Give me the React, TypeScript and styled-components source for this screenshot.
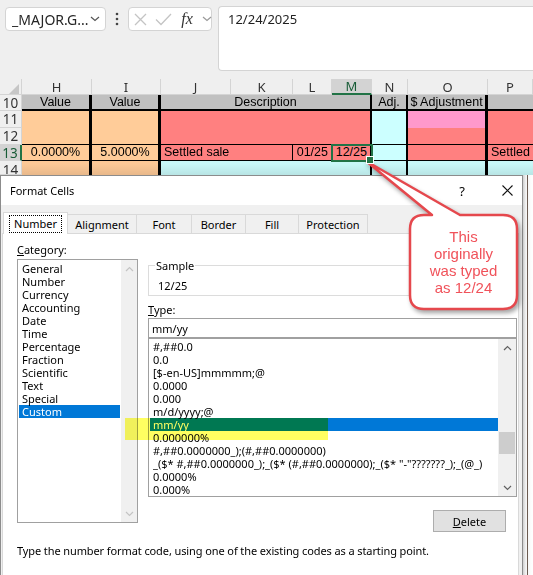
import React from "react";
import styled, { createGlobalStyle } from "styled-components";

const UI = `"Noto Sans", "DejaVu Sans", sans-serif`;
const CELL = `"Liberation Sans", Arial, sans-serif`;

const GlobalStyle = createGlobalStyle`
  * { box-sizing: border-box; }
  html, body { margin: 0; padding: 0; background: #efefef; }
  body { font-family: ${UI}; overflow: hidden; }
`;

const Page = styled.div`
  position: relative;
  width: 533px;
  height: 575px;
  overflow: hidden;
  background: #efefef;
  display: flex;
  flex-direction: column;
  isolation: isolate;
`;

/* ---------- top bar ---------- */
const TopBar = styled.div`
  flex: none;
  display: flex;
  align-items: flex-start;
  height: 79px;
  padding: 6px 0 0 5px;
`;
const NameBox = styled.div`
  margin-top: 1px;
  width: 101px;
  height: 24px;
  display: flex;
  align-items: center;
  justify-content: space-between;
  padding: 0 5px 0 6px;
  background: #fff;
  border: 1px solid #d4d4d4;
  border-radius: 4px;
  font-size: 14px;
  color: #262626;
  white-space: nowrap;
`;
const Kebab = styled.div`
  width: 22px;
  height: 24px;
  margin-top: 1px;
  display: flex;
  align-items: center;
  justify-content: center;
`;
const FxBox = styled.div`
  margin-top: 1px;
  width: 84px;
  height: 24px;
  display: grid;
  grid-template-columns: 13px 17px 14px 10px;
  column-gap: 8px;
  align-items: center;
  padding-left: 5px;
  background: #fff;
  border: 1px solid #d4d4d4;
  border-radius: 4px;
`;
const FxText = styled.span`
  font: italic 16px/1 "Liberation Serif", "Times New Roman", serif;
  color: #333;
  text-align: center;
`;
const FormulaBar = styled.div`
  flex: 1;
  margin-left: 6px;
  height: 65px;
  background: #fff;
  border: 1px solid #d4d4d4;
  border-right: none;
  border-radius: 4px 0 0 4px;
  padding: 3px 9px;
  font-size: 13px;
  line-height: 18px;
  color: #1f1f1f;
`;

/* ---------- sheet ---------- */
const Sheet = styled.div`
  flex: none;
  display: grid;
  grid-template-columns: 22px 70px 69px 70px 62px 39px 40px 36px 80px 45px;
  grid-template-rows: 16px 16px 17px 17px 16px 14px;
  background: #fff;
`;
const Corner = styled.div`
  grid-column: 1;
  grid-row: 1;
  background: #efefef;
  border-right: 1px solid #d4d4d4;
  border-bottom: 1px solid #d4d4d4;
`;
const ColHead = styled.div<{ $c: number; $sel?: boolean }>`
  grid-row: 1;
  grid-column: ${(p) => p.$c};
  display: flex;
  align-items: center;
  justify-content: center;
  background: ${(p) => (p.$sel ? "#d3d3d3" : "#efefef")};
  border-right: 1px solid #d4d4d4;
  border-bottom: ${(p) => (p.$sel ? "2px solid #217346" : "1px solid #d4d4d4")};
  font-size: 13px;
  line-height: 14px;
  color: ${(p) => (p.$sel ? "#185c37" : "#333")};
`;
const RowHead = styled.div<{ $r: number; $sel?: boolean; $clip?: boolean }>`
  grid-column: 1;
  grid-row: ${(p) => p.$r};
  display: flex;
  justify-content: center;
  align-items: ${(p) => (p.$clip ? "flex-start" : "center")};
  padding-top: ${(p) => (p.$clip ? 2 : 0)}px;
  background: ${(p) => (p.$sel ? "#d3d3d3" : "#efefef")};
  border-right: ${(p) => (p.$sel ? "2px solid #217346" : "1px solid #d4d4d4")};
  border-bottom: 1px solid #d4d4d4;
  font-size: 13.5px;
  line-height: 14px;
  color: ${(p) => (p.$sel ? "#185c37" : "#333")};
  overflow: ${(p) => (p.$clip ? "hidden" : "visible")};
`;
type CellP = {
  $c: string;
  $r: string;
  $bg: string;
  $br?: number;
  $bb?: number;
  $align?: string;
  $shade?: boolean;
};
const Cell = styled.div<CellP>`
  grid-column: ${(p) => p.$c};
  grid-row: ${(p) => p.$r};
  display: flex;
  align-items: center;
  justify-content: ${(p) => p.$align ?? "center"};
  padding: 0 3px;
  background-color: ${(p) => p.$bg};
  background-image: ${(p) =>
    p.$shade ? "linear-gradient(to bottom, rgba(0,0,0,0) 20%, rgba(0,0,0,0.08))" : "none"};
  border-right: ${(p) => p.$br ?? 0}px solid #000;
  border-bottom: ${(p) => p.$bb ?? 0}px solid #000;
  font: 12.5px/1 ${CELL};
  color: #000;
  white-space: nowrap;
  overflow: hidden;
`;
const ActiveCell = styled(Cell)`
  position: relative;
  z-index: 1;
  overflow: visible;
  outline: 2px solid #217346;
  outline-offset: -1px;
  &::after {
    content: "";
    position: absolute;
    right: -4px;
    bottom: -4px;
    width: 6px;
    height: 6px;
    background: #217346;
    border: 1px solid #fff;
  }
`;

/* ---------- dialog ---------- */
const DialogArea = styled.div`
  flex: 1;
  display: flex;
  min-height: 0;
`;
const Dialog = styled.div`
  width: 523px;
  flex: none;
  display: flex;
  flex-direction: column;
  background: #f0f0f0;
  border: 1px solid #8c8c8c;
  border-bottom: none;
`;
const SheetEdge = styled.div`
  flex: 1;
  background:
    linear-gradient(#6b5a50, #6b5a50) 4px 0 / 1px 100% no-repeat,
    linear-gradient(to right, #cfcfcf, #f4f4f4 3px, #ffffff);
`;
const TitleBar = styled.div`
  height: 29px;
  flex: none;
  display: flex;
  align-items: center;
  background: #fff;
  padding-left: 9px;
`;
const Title = styled.div`
  flex: 1;
  font-size: 11px;
  color: #000;
`;
const TitleButton = styled.div<{ $ml?: number }>`
  width: 30px;
  height: 29px;
  margin-left: ${(p) => p.$ml ?? 0}px;
  display: flex;
  align-items: center;
  justify-content: center;
  font-size: 13px;
  color: #000;
`;
const Body = styled.div`
  flex: 1;
  display: flex;
  flex-direction: column;
  padding: 7px 3px 0 1px;
  min-height: 0;
`;
const Tabs = styled.div`
  height: 21px;
  flex: none;
  display: flex;
  align-items: flex-end;
  margin-left: 1px;
  position: relative;
  z-index: 2;
`;
const Tab = styled.div<{ $w: number; $active?: boolean; $first?: boolean }>`
  position: relative;
  z-index: ${(p) => (p.$active ? 2 : 1)};
  width: ${(p) => p.$w}px;
  height: ${(p) => (p.$active ? 22 : 19)}px;
  margin-bottom: ${(p) => (p.$active ? -1 : 0)}px;
  margin-left: ${(p) => (p.$first ? 0 : -1)}px;
  display: flex;
  align-items: center;
  justify-content: center;
  background: ${(p) => (p.$active ? "#fff" : "#f0f0f0")};
  border: 1px solid #d9d9d9;
  border-bottom: none;
  font-size: 11px;
  color: #000;
`;
const Focus = styled.span`
  outline: 1px dotted #000;
  padding: 1px 4px;
  line-height: 14px;
`;
const Panel = styled.div`
  flex: 1;
  display: flex;
  flex-direction: column;
  background: #fff;
  border: 1px solid #d9d9d9;
  border-bottom: none;
  padding: 9px 1px 0 14px;
`;
const Columns = styled.div`
  display: grid;
  grid-template-columns: 121px 369px;
  column-gap: 10px;
  align-items: start;
`;
const Column = styled.div`
  display: flex;
  flex-direction: column;
`;
const Label = styled.div<{ $mt?: number }>`
  margin-top: ${(p) => p.$mt ?? 0}px;
  height: 14px;
  font-size: 11px;
  line-height: 14px;
  color: #000;
`;
const ListBox = styled.div<{ $h: number; $sb: number; $mt?: number }>`
  height: ${(p) => p.$h}px;
  margin-top: ${(p) => p.$mt ?? 0}px;
  display: grid;
  grid-template-columns: 1fr ${(p) => p.$sb}px;
  border: 1px solid #a0a0a0;
  background: #fff;
  overflow: hidden;
`;
const Items = styled.div<{ $pt: number; $pr: number }>`
  padding: ${(p) => p.$pt}px ${(p) => p.$pr}px 0 1px;
  overflow: hidden;
`;
const Item = styled.div<{ $sel?: boolean }>`
  height: 13px;
  line-height: 13px;
  padding-left: 3px;
  font-size: 11px;
  white-space: nowrap;
  background: ${(p) => (p.$sel ? "#0078d7" : "transparent")};
  color: ${(p) => (p.$sel ? "#fff" : "#000")};
`;
const ScrollBar = styled.div`
  display: flex;
  flex-direction: column;
  background: #f0f0f0;
`;
const ScrollArrow = styled.div`
  height: 17px;
  flex: none;
  display: flex;
  align-items: center;
  justify-content: center;
`;
const Track = styled.div`
  flex: 1;
  padding: 0 1px;
`;
const Thumb = styled.div<{ $top: number; $h: number }>`
  margin-top: ${(p) => p.$top}px;
  height: ${(p) => p.$h}px;
  background: #cdcdcd;
`;
const GroupBox = styled.fieldset`
  margin: 16px 0 0 0;
  min-width: 0;
  padding: 0 0 2px 9px;
  border: 1px solid #dcdcdc;
`;
const Legend = styled.legend`
  margin-left: -3px;
  padding: 0 1px;
  font-size: 11px;
  line-height: 13px;
  color: #000;
`;
const SampleValue = styled.div`
  margin-top: 7px;
  font-size: 11px;
  line-height: 14px;
  color: #000;
`;
const TextInput = styled.div`
  margin-top: 1px;
  height: 20px;
  display: flex;
  align-items: center;
  padding: 1px 0 0 3px;
  border: 1px solid #a0a0a0;
  background: #fff;
  font-size: 11px;
  color: #000;
`;
const Button = styled.div`
  align-self: flex-end;
  margin: 13px 11px 0 0;
  width: 73px;
  height: 22px;
  display: flex;
  align-items: center;
  justify-content: center;
  background: #e1e1e1;
  border: 1px solid #adadad;
  font-size: 11px;
  color: #000;
`;
const Hint = styled.div`
  margin-top: 12px;
  font-size: 11px;
  line-height: 14px;
  letter-spacing: -0.1px;
  color: #000;
  white-space: nowrap;
`;

/* ---------- overlays ---------- */
const Highlighter = styled.div`
  position: absolute;
  left: 125px;
  top: 418px;
  width: 203px;
  height: 22px;
  background: rgba(255, 255, 0, 0.62);
  mix-blend-mode: multiply;
  pointer-events: none;
`;
const CalloutWrap = styled.div`
  position: absolute;
  left: 360px;
  top: 155px;
  width: 170px;
  height: 165px;
`;
const CalloutShape = styled.svg`
  position: absolute;
  left: 0;
  top: 0;
  overflow: visible;
  filter: drop-shadow(2px 3px 2px rgba(0, 0, 0, 0.35));
`;
const CalloutText = styled.div`
  position: absolute;
  left: 50px;
  top: 60px;
  width: 107px;
  height: 94px;
  display: flex;
  align-items: center;
  justify-content: center;
  text-align: center;
  font: 15px/17px ${CELL};
  color: #f0525a;
`;

const Chevron = ({ dir, color, w = 9 }: { dir: "up" | "down"; color: string; w?: number }) => (
  <svg width={w} height="6" viewBox={`0 0 ${w} 6`}>
    <polyline
      points={dir === "up" ? `1,5 ${w / 2},1.5 ${w - 1},5` : `1,1 ${w / 2},4.5 ${w - 1},1`}
      fill="none"
      stroke={color}
      strokeWidth="1.2"
    />
  </svg>
);

const categories = [
  "General",
  "Number",
  "Currency",
  "Accounting",
  "Date",
  "Time",
  "Percentage",
  "Fraction",
  "Scientific",
  "Text",
  "Special",
  "Custom",
];

const formats = [
  "#,##0.0",
  "0.0",
  "[$-en-US]mmmmm;@",
  "0.0000",
  "0.000",
  "m/d/yyyy;@",
  "mm/yy",
  "0.000000%",
  "#,##0.0000000_);(#,##0.0000000)",
  '_($* #,##0.0000000_);_($* (#,##0.0000000);_($* "-"???????_);_(@_)',
  "0.0000%",
  "0.000%",
];

const tabs: { label: string; w: number }[] = [
  { label: "Number", w: 65 },
  { label: "Alignment", w: 70 },
  { label: "Font", w: 56 },
  { label: "Border", w: 55 },
  { label: "Fill", w: 54 },
  { label: "Protection", w: 70 },
];

const GREY = "#c0c0c0";
const PEACH = "#ffcc99";
const SALMON = "#ff8080";
const CYAN = "#ccffff";
const PINK = "#ff99cc";

export default function App() {
  return (
    <>
      <GlobalStyle />
      <Page>
        <TopBar>
          <NameBox>
            <span>_MAJOR.G...</span>
            <Chevron dir="down" color="#555" w={10} />
          </NameBox>
          <Kebab>
            <svg width="4" height="14" viewBox="0 0 4 14">
              <circle cx="2" cy="2" r="1.3" fill="#444" />
              <circle cx="2" cy="7" r="1.3" fill="#444" />
              <circle cx="2" cy="12" r="1.3" fill="#444" />
            </svg>
          </Kebab>
          <FxBox>
            <svg width="13" height="13" viewBox="0 0 13 13">
              <path d="M1 1 L12 12 M12 1 L1 12" stroke="#c4c4c4" strokeWidth="1.3" fill="none" />
            </svg>
            <svg width="17" height="13" viewBox="0 0 17 13">
              <path d="M1 6.5 L6 11.5 L16 1" stroke="#c4c4c4" strokeWidth="1.3" fill="none" />
            </svg>
            <FxText>fx</FxText>
            <Chevron dir="down" color="#9a9a9a" w={10} />
          </FxBox>
          <FormulaBar>12/24/2025</FormulaBar>
        </TopBar>

        <Sheet>
          <Corner>
            <svg width="21" height="15" viewBox="0 0 21 15">
              <polygon points="19,3 19,13 9,13" fill="#c6c6c6" />
            </svg>
          </Corner>
          {["H", "I", "J", "K", "L", "M", "N", "O", "P"].map((l, i) => (
            <ColHead key={l} $c={i + 2} $sel={l === "M"}>
              {l}
            </ColHead>
          ))}
          <RowHead $r={2}>10</RowHead>
          <RowHead $r={3}>11</RowHead>
          <RowHead $r={4}>12</RowHead>
          <RowHead $r={5} $sel>
            13
          </RowHead>
          <RowHead $r={6} $clip>
            14
          </RowHead>

          {/* row 10 */}
          <Cell $c="2" $r="2" $bg={GREY} $br={3} $bb={2}>Value</Cell>
          <Cell $c="3" $r="2" $bg={GREY} $br={3} $bb={2}>Value</Cell>
          <Cell $c="4 / 8" $r="2" $bg={GREY} $br={2} $bb={2}>Description</Cell>
          <Cell $c="8" $r="2" $bg={GREY} $br={2} $bb={2}>Adj.</Cell>
          <Cell $c="9" $r="2" $bg={GREY} $br={3} $bb={2}>$ Adjustment</Cell>
          <Cell $c="10" $r="2" $bg={GREY} $bb={2} />

          {/* rows 11-12 */}
          <Cell $c="2" $r="3 / 5" $bg={PEACH} $br={3} $bb={1} />
          <Cell $c="3" $r="3 / 5" $bg={PEACH} $br={3} $bb={1} />
          <Cell $c="4 / 8" $r="3 / 5" $bg={SALMON} $br={2} $bb={1} />
          <Cell $c="8" $r="3 / 5" $bg={CYAN} $br={2} $bb={1} />
          <Cell $c="9" $r="3" $bg={PINK} $br={3} />
          <Cell $c="9" $r="4" $bg={SALMON} $br={3} $bb={1} />
          <Cell $c="10" $r="3 / 5" $bg={SALMON} $bb={1} />

          {/* row 13 */}
          <Cell $c="2" $r="5" $bg={PEACH} $br={3} $bb={1}>0.0000%</Cell>
          <Cell $c="3" $r="5" $bg={PEACH} $br={3} $bb={1}>5.0000%</Cell>
          <Cell $c="4 / 6" $r="5" $bg={SALMON} $br={1} $bb={1} $align="flex-start">
            Settled sale
          </Cell>
          <Cell $c="6" $r="5" $bg={SALMON} $br={1} $bb={1} $align="flex-end">01/25</Cell>
          <ActiveCell $c="7" $r="5" $bg={SALMON} $br={2} $bb={1} $align="flex-end">
            12/25
          </ActiveCell>
          <Cell $c="8" $r="5" $bg={CYAN} $br={2} $bb={1} />
          <Cell $c="9" $r="5" $bg={SALMON} $br={3} $bb={1} />
          <Cell $c="10" $r="5" $bg={SALMON} $bb={1} $align="flex-start">Settled</Cell>

          {/* row 14 */}
          <Cell $c="2" $r="6" $bg="#fcc896" $br={3} $shade />
          <Cell $c="3" $r="6" $bg="#fcc896" $br={3} $shade />
          <Cell $c="4 / 8" $r="6" $bg="#c8f8f8" $br={2} $shade />
          <Cell $c="8" $r="6" $bg="#c8f8f8" $br={2} $shade />
          <Cell $c="9" $r="6" $bg="#c8f8f8" $br={3} $shade />
          <Cell $c="10" $r="6" $bg="#c8f8f8" $shade />
        </Sheet>

        <DialogArea>
          <Dialog>
            <TitleBar>
              <Title>Format Cells</Title>
              <TitleButton>?</TitleButton>
              <TitleButton $ml={15}>
                <svg width="11" height="11" viewBox="0 0 11 11">
                  <path d="M0.5 0.5 L10.5 10.5 M10.5 0.5 L0.5 10.5" stroke="#111" strokeWidth="1.1" />
                </svg>
              </TitleButton>
            </TitleBar>
            <Body>
              <Tabs>
                {tabs.map((t, i) => (
                  <Tab key={t.label} $w={t.w} $active={i === 0} $first={i === 0}>
                    {i === 0 ? <Focus>{t.label}</Focus> : t.label}
                  </Tab>
                ))}
              </Tabs>
              <Panel>
                <Columns>
                  <Column>
                    <Label>
                      <u>C</u>ategory:
                    </Label>
                    <ListBox $h={264} $sb={16} $mt={2}>
                      <Items $pt={2} $pr={1}>
                        {categories.map((c) => (
                          <Item key={c} $sel={c === "Custom"}>
                            {c}
                          </Item>
                        ))}
                      </Items>
                      <ScrollBar>
                        <ScrollArrow>
                          <Chevron dir="up" color="#c4c4c4" />
                        </ScrollArrow>
                        <Track />
                        <ScrollArrow>
                          <Chevron dir="down" color="#c4c4c4" />
                        </ScrollArrow>
                      </ScrollBar>
                    </ListBox>
                  </Column>
                  <Column>
                    <GroupBox>
                      <Legend>Sample</Legend>
                      <SampleValue>12/25</SampleValue>
                    </GroupBox>
                    <Label $mt={7}>
                      <u>T</u>ype:
                    </Label>
                    <TextInput>mm/yy</TextInput>
                    <ListBox $h={159} $sb={18}>
                      <Items $pt={1} $pr={0}>
                        {formats.map((f) => (
                          <Item key={f} $sel={f === "mm/yy"}>
                            {f}
                          </Item>
                        ))}
                      </Items>
                      <ScrollBar>
                        <ScrollArrow>
                          <Chevron dir="up" color="#606060" />
                        </ScrollArrow>
                        <Track>
                          <Thumb $top={76} $h={22} />
                        </Track>
                        <ScrollArrow>
                          <Chevron dir="down" color="#606060" />
                        </ScrollArrow>
                      </ScrollBar>
                    </ListBox>
                    <Button>
                      <span>
                        <u>D</u>elete
                      </span>
                    </Button>
                  </Column>
                </Columns>
                <Hint>Type the number format code, using one of the existing codes as a starting point.</Hint>
              </Panel>
            </Body>
          </Dialog>
          <SheetEdge />
        </DialogArea>

        <Highlighter />
        <CalloutWrap>
          <CalloutShape width="170" height="165" viewBox="0 0 170 165">
            <path
              d="M72 60 L6 6 L100 60 L143 60 Q157 60 157 74 L157 140 Q157 154 143 154 L64 154 Q50 154 50 140 L50 74 Q50 60 64 60 Z"
              fill="#fff"
              stroke="#e5484d"
              strokeWidth="2.5"
              strokeLinejoin="round"
            />
          </CalloutShape>
          <CalloutText>
            <div>
              This
              <br />
              originally
              <br />
              was typed
              <br />
              as 12/24
            </div>
          </CalloutText>
        </CalloutWrap>
      </Page>
    </>
  );
}
